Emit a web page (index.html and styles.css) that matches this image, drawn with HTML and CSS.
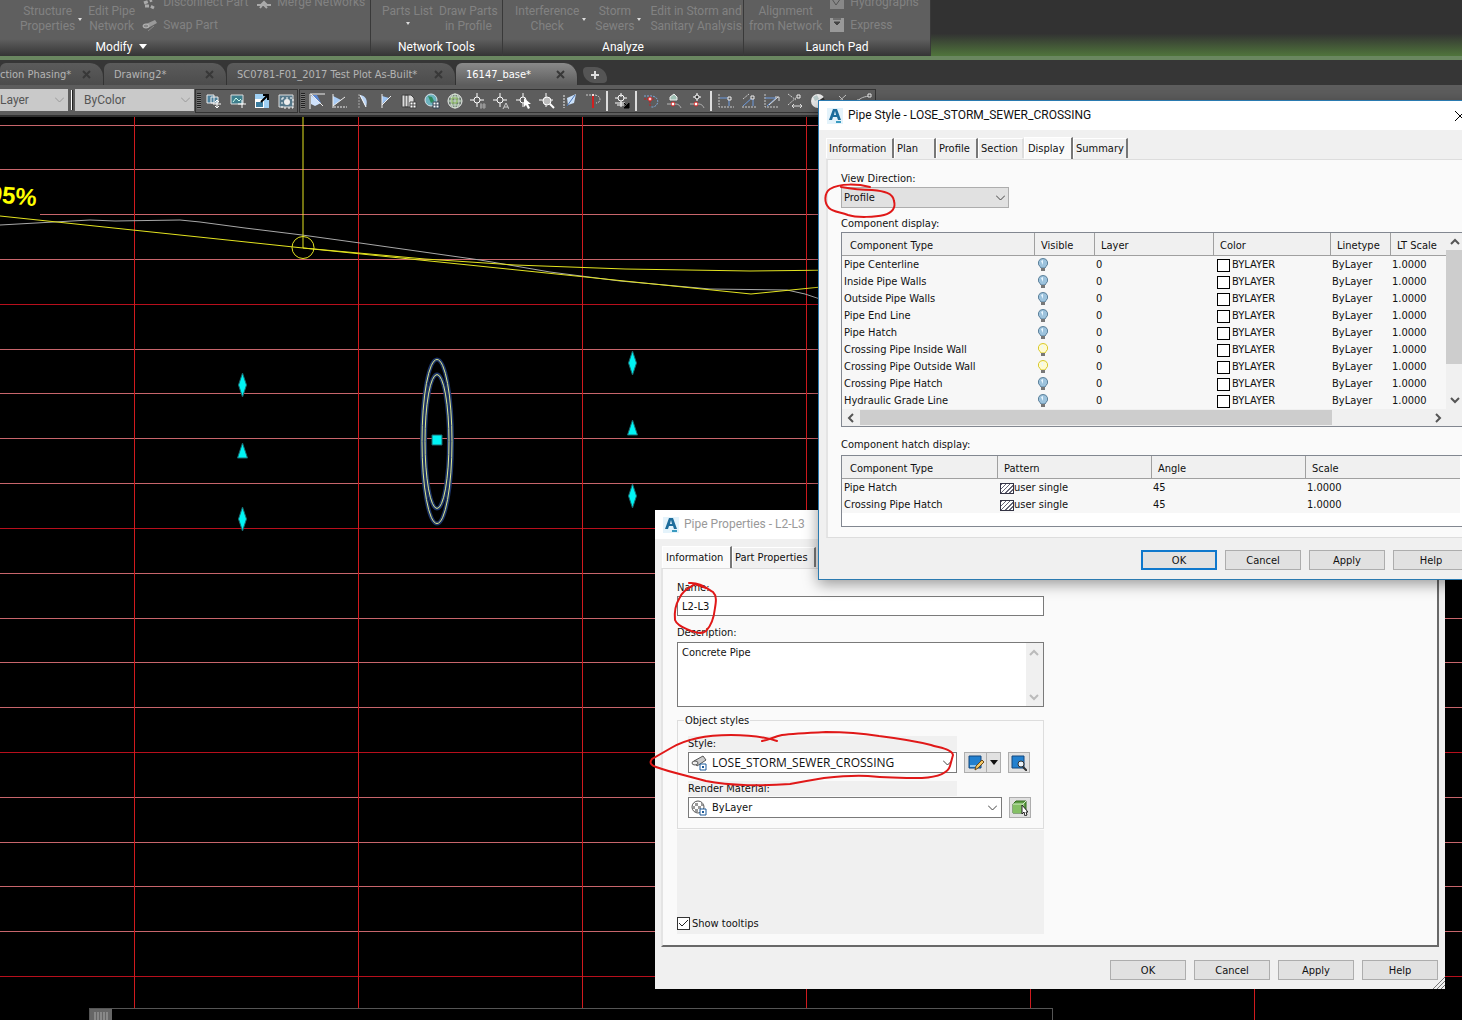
FILE: index.html
```html
<!DOCTYPE html>
<html lang="en">
<head>
    <meta charset="UTF-8">
    <meta name="viewport" content="width=device-width, initial-scale=1.0">
    <title>16147_base</title>
    <link rel="stylesheet" href="styles.css">
</head>
<body>
    <header class="ribbon">
        <section class="panel panel-modify">
            <div class="panel-body">
                <button class="tool drop"><span>Structure<br>Properties</span></button>
                <button class="tool"><span>Edit Pipe<br>Network</span></button>
                <div class="tool-list">
                    <button class="tool-row"><svg class="icon" viewBox="0 0 16 16"><path d="M2 9l8-3M3 12h5l4 2" stroke="#aaa" stroke-width="3" stroke-dasharray="4 2" fill="none"/></svg>Disconnect Part</button>
                    <button class="tool-row"><svg class="icon" viewBox="0 0 16 16"><path d="M4 7l9-4 2 3-9 5z" fill="#999"/><ellipse cx="4" cy="9" rx="3" ry="2" fill="#888" stroke="#bbb"/><path d="M6 14l6-5" stroke="#888"/></svg>Swap Part</button>
                </div>
                <div class="tool-list">
                    <button class="tool-row"><svg class="icon" viewBox="0 0 16 16"><path d="M1 11h4l3-3 3 3h4M4 14l3-4 4 4" stroke="#aaa" stroke-width="2" fill="none"/></svg>Merge Networks</button>
                </div>
            </div>
            <h2 class="panel-title">Modify <span class="caret"></span></h2>
        </section>
        <section class="panel panel-network">
            <div class="panel-body">
                <button class="tool drop-below"><span>Parts List</span></button>
                <button class="tool"><span>Draw Parts<br>in Profile</span></button>
            </div>
            <h2 class="panel-title">Network Tools</h2>
        </section>
        <section class="panel panel-analyze">
            <div class="panel-body">
                <button class="tool drop"><span>Interference<br>Check</span></button>
                <button class="tool drop"><span>Storm<br>Sewers</span></button>
                <button class="tool"><span>Edit in Storm and<br>Sanitary Analysis</span></button>
            </div>
            <h2 class="panel-title">Analyze</h2>
        </section>
        <section class="panel panel-launch">
            <div class="panel-body">
                <button class="tool"><span>Alignment<br>from Network</span></button>
                <div class="tool-list">
                    <button class="tool-row"><svg class="icon" viewBox="0 0 16 16"><path d="M1 1h14v14H1z" fill="#888"/><path d="M3 5l4 6 5-7" stroke="#555" fill="none"/></svg>Hydrographs</button>
                    <button class="tool-row"><svg class="icon" viewBox="0 0 16 16"><path d="M1 1h14v14H1z" fill="#999"/><path d="M4 2h8M5 5h6l-3 3z" stroke="#444" fill="#444"/></svg>Express</button>
                </div>
            </div>
            <h2 class="panel-title">Launch Pad</h2>
        </section>
    </header>

    <nav class="file-tabs">
        <a class="file-tab tab-first" href="#">ction Phasing* <svg class="close" viewBox="0 0 9 9"><path d="M1 1l7 7M8 1l-7 7"/></svg></a>
        <a class="file-tab tab-drawing" href="#">Drawing2* <svg class="close" viewBox="0 0 9 9"><path d="M1 1l7 7M8 1l-7 7"/></svg></a>
        <a class="file-tab tab-plot" href="#">SC0781-F01_2017 Test Plot As-Built* <svg class="close" viewBox="0 0 9 9"><path d="M1 1l7 7M8 1l-7 7"/></svg></a>
        <a class="file-tab tab-base current" href="#">16147_base* <svg class="close" viewBox="0 0 9 9"><path d="M1 1l7 7M8 1l-7 7"/></svg></a>
        <button class="new-tab" aria-label="New drawing"><svg viewBox="0 0 10 10" width="10" height="10"><path d="M5 1v8M1 5h8" stroke="#ddd" stroke-width="2"/></svg></button>
    </nav>

    <div class="toolbar">
        <select class="prop-select select-layer" aria-label="Lineweight"><option>Layer</option></select>
        <span class="grip-line"></span>
        <select class="prop-select select-color" aria-label="Plot style"><option>ByColor</option></select>
        <div class="tool-group group-image">
            <span class="grip"></span>
            <button aria-label="Move image"><svg class="icon" viewBox="0 0 16 16"><path d="M1 2h7v8H1zM5 4h7v6H5z" fill="#4b7f9b" stroke="#eee"/><path d="M11 7v8M7 11h8M9 9l2-2 2 2M9 13l2 2 2-2" stroke="#fff" fill="none"/></svg></button>
            <button aria-label="Insert image"><svg class="icon" viewBox="0 0 16 16"><path d="M1 2h12v9H1z" fill="#3f7f8d" stroke="#ddd"/><path d="M3 9l3-4 3 3 2-2" stroke="#cfe" fill="none"/><path d="M12 7v8M8 11h8" stroke="#fff"/></svg></button>
            <button aria-label="Scale image"><svg class="icon" viewBox="0 0 16 16"><path d="M1 1h14v14H1z" fill="#9fd0f4"/><path d="M1 6h9v9H1z" fill="#fff"/><path d="M2 9h7v5H2z" fill="#3c7d9f"/><path d="M7 9l7-7M9 2h5v5" stroke="#000" stroke-width="2" fill="none"/></svg></button>
            <button aria-label="Image frame"><svg class="icon" viewBox="0 0 16 16"><path d="M1 2h14v12H1z" fill="#56788a" stroke="#ddd"/><circle cx="9" cy="9" r="3" fill="#eee"/><path d="M4 5h11v10H4z" fill="none" stroke="#fff" stroke-dasharray="2 2"/></svg></button>
        </div>
        <div class="tool-group">
            <span class="grip"></span>
            <button aria-label="Angle distance"><svg class="icon" viewBox="0 0 16 16"><path d="M2 2l10 8-6 3-4-2z" fill="#cfe2fb"/><path d="M3 2l9 8-4-8z" fill="#5b88d4"/><path d="M1 16V1h15M2 1l12 12" stroke="#eee" fill="none"/></svg></button>
            <button aria-label="Bearing distance"><svg class="icon" viewBox="0 0 16 16"><path d="M1 3l8 4-8 6z" fill="#a9ccf6"/><path d="M1 1v14M1 13L13 4" stroke="#eee" fill="none"/><path d="M2 14h13" stroke="#eee" stroke-dasharray="2 1"/></svg></button>
            <button aria-label="Azimuth distance"><svg class="icon" viewBox="0 0 16 16"><path d="M5 2c6 1 8 5 6 12z" fill="#b9d3f4"/><path d="M4 1v14" stroke="#aaa" stroke-dasharray="2 1"/><path d="M5 2l6 12" stroke="#fff"/></svg></button>
            <button aria-label="Deflection"><svg class="icon" viewBox="0 0 16 16"><path d="M4 3l7 2-7 6z" fill="#9ec5f5"/><path d="M4 1v14M4 12l9-9" stroke="#eee"/></svg></button>
            <button aria-label="Northing easting"><svg class="icon" viewBox="0 0 16 16"><path d="M1 2h6v12H1zM4 2h6l3 3v9H4z" fill="#ddd" stroke="#444"/><path d="M9 9h6v6H9z" fill="#fff" stroke="#444"/><path d="M9 12h6M12 9v6" stroke="#444"/></svg></button>
            <button aria-label="Grid northing"><svg class="icon" viewBox="0 0 16 16"><circle cx="7" cy="7" r="6" fill="#6db3bf" stroke="#d8e4ec"/><path d="M4 3l4 1 2 4-3 2z" fill="#2d8b5c"/><path d="M9 9h6v6H9z" fill="#fff" stroke="#345"/><path d="M9 12h6M12 9v6" stroke="#345"/></svg></button>
            <button aria-label="Latitude longitude"><svg class="icon" viewBox="0 0 16 16"><circle cx="8" cy="8" r="7" fill="#6d7c72" stroke="#eee"/><path d="M1 8h14M8 1v14M3 4h10M3 12h10" stroke="#cfe0cc" fill="none"/><ellipse cx="8" cy="8" rx="4" ry="7" fill="none" stroke="#cfe0cc"/><path d="M5 5h5v5H5z" fill="none" stroke="#9c6"/></svg></button>
            <button aria-label="Point number"><svg class="icon" viewBox="0 0 16 16"><circle cx="7" cy="7" r="3" fill="none" stroke="#fff"/><path d="M7 0v4M7 10v4M0 7h4M10 7h4" stroke="#fff"/><path d="M11 10v6M14 10v6M10 12h6M10 14h6" stroke="#ccc" stroke-width=".6"/></svg></button>
            <button aria-label="Point name"><svg class="icon" viewBox="0 0 16 16"><circle cx="7" cy="7" r="3" fill="none" stroke="#fff"/><path d="M7 0v4M7 10v4M0 7h4M10 7h4" stroke="#fff"/><path d="M10 16l3-6 3 6M11 14h4" stroke="#ccc" fill="none"/></svg></button>
            <button aria-label="Point object"><svg class="icon" viewBox="0 0 16 16"><circle cx="7" cy="7" r="3" fill="none" stroke="#fff"/><path d="M7 0v4M7 10v4M0 7h4" stroke="#fff"/><path d="M8 5v9l2-2 2 4 2-1-2-4h3z" fill="#fff"/></svg></button>
            <button aria-label="Zoom to point"><svg class="icon" viewBox="0 0 16 16"><path d="M7 0v5M7 9v5M0 7h5M9 7h5" stroke="#fff"/><circle cx="8" cy="8" r="4" fill="#bbb" stroke="#fff"/><path d="M11 11l4 4" stroke="#fff" stroke-width="2"/></svg></button>
            <button aria-label="Side shot"><svg class="icon" viewBox="0 0 16 16"><path d="M2 2v13" stroke="#eee" stroke-dasharray="2 1"/><path d="M5 5l9-4-2 9-6 2z" fill="#cbe1fa"/><path d="M5 13l8-11" stroke="#4a75b5"/></svg></button>
            <button aria-label="Station offset"><svg class="icon" viewBox="0 0 16 16"><path d="M8 1v14" stroke="#d02020" stroke-width="2"/><path d="M1 2h9c7 1 6 8 1 8" stroke="#ccc" fill="none" stroke-dasharray="2 1"/><circle cx="8" cy="2" r="1" fill="#fff"/></svg></button>
            <span class="sep"></span>
            <button aria-label="Point transparency"><svg class="icon" viewBox="0 0 16 16"><circle cx="7" cy="5" r="3" fill="none" stroke="#fff"/><path d="M7 0v4M7 8v6M1 5h3M10 5h3M1 10h10M3 12h7" stroke="#fff"/><path d="M10 10l4 4M15 10v5h-5z" stroke="#000" fill="#000"/></svg></button>
            <span class="sep"></span>
            <button aria-label="Profile station"><svg class="icon" viewBox="0 0 16 16"><path d="M1 3h8c8 1 7 10 1 11H8" stroke="#7fa8d8" fill="none" stroke-dasharray="2 1"/><path d="M7 5v9M1 6h10" stroke="#c02020" stroke-dasharray="2 1"/><circle cx="7" cy="6" r="2" fill="#fcc" stroke="#d02020"/></svg></button>
            <button aria-label="Profile elevation"><svg class="icon" viewBox="0 0 16 16"><path d="M4 7V4l4-3 3 3v3z" fill="#9fc0b4" stroke="#eee"/><circle cx="7" cy="11" r="2" fill="#fff" stroke="#d02020"/><path d="M1 11h4M9 11c4 0 5 2 6 4" stroke="#b9b9b9" fill="none"/></svg></button>
            <button aria-label="Profile grade"><svg class="icon" viewBox="0 0 16 16"><circle cx="8" cy="4" r="2" fill="#333" stroke="#fff"/><path d="M8 0v2M8 6v2M4 4h2M10 4h2" stroke="#fff"/><circle cx="7" cy="11" r="2" fill="#fff" stroke="#d02020"/><path d="M1 11h4M9 11c4 0 5 2 6 4" stroke="#b9b9b9" fill="none"/></svg></button>
            <span class="sep"></span>
            <button aria-label="Station and elevation"><svg class="icon" viewBox="0 0 16 16"><path d="M1 1v13h15" stroke="#ccc" fill="none" stroke-dasharray="2 1"/><path d="M2 5h9v8" stroke="#6c9be0" fill="none"/><path d="M10 4h3v3h-3z" fill="#555" stroke="#eee"/></svg></button>
            <button aria-label="Grade length"><svg class="icon" viewBox="0 0 16 16"><path d="M1 14h14M2 6l6-5" stroke="#ccc" fill="none" stroke-dasharray="2 1"/><path d="M2 13L12 4v9" stroke="#6c9be0" fill="none"/><path d="M10 3h3v3h-3z" fill="#555" stroke="#eee"/></svg></button>
            <button aria-label="Grade station"><svg class="icon" viewBox="0 0 16 16"><path d="M1 1v13h14" stroke="#ccc" fill="none" stroke-dasharray="2 1"/><path d="M1 5h11L3 13" stroke="#6c9be0" fill="none"/><path d="M5 12l9-8M11 4h4v4" stroke="#ddd" fill="none"/></svg></button>
            <button aria-label="Grade elevation"><svg class="icon" viewBox="0 0 16 16"><path d="M1 12L11 3M1 1l8 6" stroke="#ccc" fill="none" stroke-dasharray="2 1"/><path d="M10 2h3v3h-3z" fill="#555" stroke="#eee"/><path d="M5 13h10M7 11l-2 2 2 2M13 11l2 2-2 2" stroke="#ddd" fill="none"/></svg></button>
            <button aria-label="Render"><svg class="icon" viewBox="0 0 16 16"><circle cx="8" cy="8" r="7" fill="#eee"/><path d="M8 8l6-4c2 4 1 9-3 10z" fill="#333"/><path d="M3 4l4-2 2 4-4 2z" fill="#bcc"/></svg></button>
            <button aria-label="Match radius"><svg class="icon" viewBox="0 0 16 16"><path d="M3 11L13 2M6 3l5 5" stroke="#ccc" fill="none"/></svg></button>
            <button aria-label="Match length"><svg class="icon" viewBox="0 0 16 16"><path d="M1 9c2-3 5-5 12-6" stroke="#ccc" fill="none"/><path d="M12 1h3v3h-3zM1 7h3v3H1z" fill="#555" stroke="#eee"/></svg></button>
        </div>
    </div>

    <main class="drawing">
        <svg class="canvas" width="100%" height="100%">
            <!-- profile view grid -->
            <path class="grid-minor" d="M0 8.5h4000M0 52.5h4000M0 97.5h4000M0 142.5h4000M0 232.5h4000M0 276.5h4000M0 321.5h4000M0 366.5h4000M0 456.5h4000M0 501.5h4000M0 545.5h4000M0 590.5h4000M0 680.5h4000M0 725.5h4000M0 769.5h4000M0 814.5h4000"/>
            <path class="grid-major" d="M0 187.5h4000M0 411.5h4000M0 635.5h4000M0 859.5h4000"/>
            <path class="grid-station" d="M134.5 0v2000M358.5 0v2000M582.5 0v2000M806.5 0v2000M1030.5 0v2000M1254.5 0v2000"/>
            <path d="M0 62h40v36H0z" fill="#000"/>
            <text class="slope" x="36" y="89" transform="rotate(5 36 89)">0.95%</text>
            <!-- ground and pipe runs -->
            <path class="ground" d="M0 108L90 103L115 104L180 103L200 105L245 111L302 118L360 126L480 143L550 155L620 164L710 172L787 173L805 177L820 182"/>
            <path class="run" d="M0 99l303 32 448 46 80-8M303 131l122 11 90 6 110 4 125 2 90-1M303 0v131"/>
            <circle class="run" cx="303" cy="130.500" r="11"/>
            <g class="pipe-glow">
                <ellipse cx="437" cy="324.500" rx="15" ry="82"/>
                <ellipse cx="437" cy="324.500" rx="12" ry="67"/>
            </g>
            <g class="pipe">
                <ellipse cx="437" cy="324.500" rx="15" ry="82"/>
                <ellipse cx="437" cy="324.500" rx="12" ry="67"/>
            </g>
            <path class="grip-mark" d="M432 318h10v10h-10zM242.500 256l4 12-4 12-4-12zM242.500 326l5 15h-10zM242.500 390l4 12-4 12-4-12zM632.500 234l4 12-4 12-4-12zM632.500 303l5 15h-10zM632.500 367l4 12-4 12-4-12z"/>
        </svg>
        <div class="command-line">
            <span class="command-grip"></span>
            <input class="command-input" type="text" aria-label="Command">
        </div>
    </main>

    <form class="window win-properties">
        <div class="title-bar">
            <svg class="app-icon" viewBox="0 0 16 16"><path d="M0 0h16v16H0z" fill="#e4f3fb"/><path d="M2 12L6 1h4l4 11h-3l-1-3H6l-1 3z" fill="#1d6d9c"/><path d="M7 7h2L8 3z" fill="#e4f3fb"/><path d="M9 14h5" stroke="#3a9ac0" stroke-width="2"/></svg>
            <h1>Pipe Properties - L2-L3</h1>
        </div>
        <div class="tabs">
            <button type="button" class="tab active tab-info">Information</button>
            <button type="button" class="tab tab-part">Part Properties</button>
        </div>
        <div class="sheet">
            <div class="info-column">
                <label for="pipe-name">Name:</label>
                <input id="pipe-name" type="text" value="L2-L3">
                <label for="pipe-desc" class="label-desc">Description:</label>
                <div class="text-area">
                    <textarea id="pipe-desc">Concrete Pipe</textarea>
                    <div class="text-scroll">
                        <svg viewBox="0 0 9 6"><path d="M1 5l4-4 4 4"/></svg>
                        <svg viewBox="0 0 9 6"><path d="M1 1l4 4 4-4"/></svg>
                    </div>
                </div>
                <fieldset>
                    <legend>Object styles</legend>
                    <label class="shade" for="pipe-style">Style:</label>
                    <div class="field-row">
                        <div class="combo combo-style">
                            <svg class="icon" viewBox="0 0 16 16"><path d="M3 6l9-5 3 4-9 6z" fill="#ccc" stroke="#555"/><ellipse cx="4" cy="8" rx="3" ry="2" fill="#eee" stroke="#555"/><path d="M9 9h6v6H9z" fill="#fff" stroke="#1c5a9a"/><path d="M11 11h2v2h-2z" fill="#1c5a9a"/></svg>
                            <select id="pipe-style"><option>LOSE_STORM_SEWER_CROSSING</option></select>
                        </div>
                        <div class="split">
                            <button type="button" class="edit-style" aria-label="Edit style"><svg class="icon" viewBox="0 0 16 16"><path d="M1 1h12v12H1z" fill="#2280cf" stroke="#12467c"/><path d="M2 10h7v2H2z" fill="#8cc4f0"/><path d="M7 15l1-4 6-6 2 2-6 6z" fill="#f2c766" stroke="#6b4a1a"/></svg></button>
                            <button type="button" class="edit-menu" aria-label="Style menu"><span class="caret"></span></button>
                        </div>
                        <button type="button" class="pick" aria-label="Style details"><svg class="icon" viewBox="0 0 16 16"><path d="M1 1h12v12H1z" fill="#2280cf" stroke="#12467c"/><circle cx="10" cy="9" r="3" fill="#e8f2fa" stroke="#333"/><path d="M12 12l4 4" stroke="#333" stroke-width="2"/></svg></button>
                    </div>
                    <label class="shade" for="pipe-material">Render Material:</label>
                    <div class="field-row">
                        <div class="combo combo-material">
                            <svg class="icon" viewBox="0 0 16 16"><circle cx="7" cy="7" r="6" fill="#fff" stroke="#555"/><path d="M4 3h3v3H4zM7 6h3v3H7zM2 6h2v3H2zM4 9h3v3H4zM10 3h2v3h-2z" fill="#999"/><path d="M9 9h6v6H9z" fill="#fff" stroke="#1c5a9a"/><path d="M11 11h2v2h-2z" fill="#1c5a9a"/></svg>
                            <select id="pipe-material"><option>ByLayer</option></select>
                        </div>
                        <button type="button" class="pick" aria-label="Pick material"><svg class="icon" viewBox="0 0 16 16"><path d="M1 4l3-3h10v9l-3 3H1z" fill="#5d9e43" stroke="#33691e"/><path d="M1 4h10v9H1z" fill="#84c065"/><path d="M1 4h10l3-3M11 4v9" stroke="#d5ecc8" fill="none"/><path d="M10 5v9l2-2 1 4 2-1-1-3h2z" fill="#fff" stroke="#222"/></svg></button>
                    </div>
                </fieldset>
                <div class="tooltips">
                    <input id="show-tooltips" type="checkbox" checked>
                    <label for="show-tooltips">Show tooltips</label>
                </div>
            </div>
        </div>
        <div class="buttons">
            <button type="button">OK</button>
            <button type="button">Cancel</button>
            <button type="button">Apply</button>
            <button type="button">Help</button>
        </div>
        <svg class="resize" viewBox="0 0 12 12"><path d="M0 12L12 0M4 12l8-8M8 12l4-4" stroke="#777"/></svg>
    </form>

    <form class="window win-style">
        <div class="title-bar">
            <svg class="app-icon" viewBox="0 0 16 16"><path d="M0 0h16v16H0z" fill="#e4f3fb"/><path d="M2 12L6 1h4l4 11h-3l-1-3H6l-1 3z" fill="#1d6d9c"/><path d="M7 7h2L8 3z" fill="#e4f3fb"/><path d="M9 14h5" stroke="#3a9ac0" stroke-width="2"/></svg>
            <h1>Pipe Style - LOSE_STORM_SEWER_CROSSING</h1>
            <button type="button" class="close-window" aria-label="Close"><svg viewBox="0 0 10 10" width="10" height="10"><path d="M0 0l10 10M10 0L0 10" stroke="#000"/></svg></button>
        </div>
        <div class="tabs">
            <button type="button" class="tab tab-w66">Information</button>
            <button type="button" class="tab tab-w42">Plan</button>
            <button type="button" class="tab tab-w42">Profile</button>
            <button type="button" class="tab tab-w46">Section</button>
            <button type="button" class="tab active tab-w48">Display</button>
            <button type="button" class="tab tab-w54">Summary</button>
        </div>
        <div class="sheet">
            <label for="view-direction">View Direction:</label>
            <select id="view-direction"><option>Profile</option></select>
            <h2>Component display:</h2>
            <div class="list">
                <div class="list-main">
                    <table class="components">
                        <thead>
                            <tr><th class="c-type">Component Type</th><th class="c-visible">Visible</th><th class="c-layer">Layer</th><th class="c-color">Color</th><th class="c-line">Linetype</th><th class="c-scale">LT Scale</th></tr>
                        </thead>
                        <tbody id="component-rows"></tbody>
                    </table>
                    <div class="v-scroll">
                        <svg viewBox="0 0 9 6"><path d="M1 5l4-4 4 4"/></svg>
                        <span class="v-thumb"></span>
                        <svg viewBox="0 0 9 6"><path d="M1 1l4 4 4-4"/></svg>
                    </div>
                </div>
                <div class="h-scroll">
                    <svg viewBox="0 0 6 9"><path d="M5 1L1 5l4 4"/></svg>
                    <span class="h-thumb"></span>
                    <svg viewBox="0 0 6 9"><path d="M1 1l4 4-4 4"/></svg>
                </div>
            </div>
            <h2 class="hatch-title">Component hatch display:</h2>
            <div class="list list-hatch">
                <table class="hatches">
                    <thead>
                        <tr><th class="h-type">Component Type</th><th>Pattern</th><th>Angle</th><th>Scale</th></tr>
                    </thead>
                    <tbody>
                        <tr><td>Pipe Hatch</td><td><span class="hatch"></span>user single</td><td>45</td><td>1.0000</td></tr>
                        <tr><td>Crossing Pipe Hatch</td><td><span class="hatch"></span>user single</td><td>45</td><td>1.0000</td></tr>
                    </tbody>
                </table>
            </div>
        </div>
        <div class="buttons">
            <button type="button" class="default">OK</button>
            <button type="button">Cancel</button>
            <button type="button">Apply</button>
            <button type="button">Help</button>
        </div>
    </form>

    <!-- red pen markup -->
    <svg class="markup" width="100%" height="100%">
        <path d="M870 187C858 184 840 183 830 189C824 193 824 203 829 208C833 212 840 212 848 215C857 218 876 217 884 215C892 213 896 208 894 201C893 193 884 191 872 190C862 190 852 189 841 187"/>
        <path d="M689 583C699 582 706 588 713 592C717 596 716 602 715 608C714 617 711 626 706 631C701 635 696 632 691 631C685 628 677 626 675 620C674 610 676 604 679 599C682 591 689 588 695 584L706 588"/>
        <path d="M777 741C762 736 747 735 731 735C708 735 686 739 671 748L652 759C649 763 651 765 656 767C672 773 690 776 706 781C730 786 765 786 790 784C806 781 812 780 824 778C842 776 856 775 868 776C890 778 908 778 922 778C937 777 948 773 950 766L953 755C952 749 940 748 931 745C911 740 895 738 879 736C860 733 845 732 826 732C806 733 790 734 782 735C773 737 769 740 762 741"/>
    </svg>

    <script>
        const components = [
            ['Pipe Centerline', false],
            ['Inside Pipe Walls', false],
            ['Outside Pipe Walls', false],
            ['Pipe End Line', false],
            ['Pipe Hatch', false],
            ['Crossing Pipe Inside Wall', true],
            ['Crossing Pipe Outside Wall', true],
            ['Crossing Pipe Hatch', false],
            ['Hydraulic Grade Line', false]
        ];

        function bulb(on) {
            return `<svg class="bulb ${on ? 'on' : ''}" viewBox="0 0 10 14">
                <path class="glass" d="M5 .5a4.500 4.500 0 0 1 3 8L7 10H3L2 8.500a4.500 4.500 0 0 1 3-8z"/>
                <path class="shine" d="M3 3l2-1v5z"/>
                <path class="base" d="M3 10h4v3H3z"/>
            </svg>`;
        }

        document.getElementById('component-rows').innerHTML = components.map(([name, on]) => `
            <tr>
                <td>${name}</td>
                <td class="cell-bulb">${bulb(on)}</td>
                <td>0</td>
                <td><span class="swatch"></span>BYLAYER</td>
                <td>ByLayer</td>
                <td>1.0000</td>
            </tr>`).join('');
    </script>
</body>
</html>
```

FILE: styles.css
```css
:root {
    --ui-font: "DejaVu Sans Condensed", "Open Sans", sans-serif;
    --ribbon-font: Roboto, "Open Sans", sans-serif;
    --combo-font: "Open Sans", "Noto Sans", sans-serif;
    --face: #f0f0f0;
    --sheet: #fafafa;
    --chevron: url("data:image/svg+xml,%3Csvg xmlns='http://www.w3.org/2000/svg' width='9' height='6'%3E%3Cpath d='M0 0.500l4.500 4.500 4.500-4.500' fill='none' stroke='%23444'/%3E%3C/svg%3E");
    --chevron-dim: url("data:image/svg+xml,%3Csvg xmlns='http://www.w3.org/2000/svg' width='9' height='6'%3E%3Cpath d='M0 0.500l4.500 4.500 4.500-4.500' fill='none' stroke='%23999'/%3E%3C/svg%3E");
}

* {
    box-sizing: border-box;
}
body {
    margin: 0;
    height: 100vh;
    display: flex;
    flex-direction: column;
    overflow: hidden;
    position: relative;
    background: #000;
    font-family: var(--ui-font);
    font-size: 11px;
    line-height: 15px;
    color: #111;
}
button, input, select, textarea {
    font: inherit;
    color: inherit;
    margin: 0;
    padding: 0;
    border: 0;
    border-radius: 0;
    background: none;
    outline: none;
}
h1, h2 {
    margin: 0;
    font-size: inherit;
    font-weight: normal;
}
.icon {
    width: 16px;
    height: 16px;
    flex: none;
}
.caret {
    display: inline-block;
    border: 4px solid transparent;
    border-top: 5px solid currentColor;
    border-bottom: 0;
}

/* ribbon */
.ribbon {
    display: flex;
    flex: none;
    height: 60px;
    font-family: var(--ribbon-font);
    font-size: 12px;
    background: linear-gradient(#323232 60%, #50753c);
    border-bottom: 4px solid #6a8760;
    overflow: hidden;
}
.panel {
    display: flex;
    flex-direction: column;
    border-right: 1px solid #393939;
    background: linear-gradient(#5f5f5f 70%, #353535);
}
.panel-modify { width: 371px; }
.panel-network { width: 132px; }
.panel-analyze { width: 241px; }
.panel-launch { width: 187px; }
.panel-body {
    display: flex;
    height: 41px;
    color: #828282;
}
.panel-title {
    text-align: center;
    color: #fff;
    line-height: 17px;
}
.panel-modify .panel-title {
    padding-right: 127px;
}
.panel-modify .caret {
    margin: 0 0 2px 4px;
}
.panel-modify .panel-body { padding-left: 17px; }
.panel-network .panel-body { padding-left: 8px; }
.panel-analyze .panel-body { padding-left: 9px; gap: 3px; }
.panel-launch .panel-body { padding-left: 2px; }
.tool {
    display: flex;
    align-items: flex-start;
    padding: 4px 3px 0;
    white-space: nowrap;
}
.drop::after, .drop-below::after {
    content: "";
    margin: 14px 0 0 3px;
    border: 2px solid transparent;
    border-top: 3px solid #ddd;
    border-bottom: 0;
}
.drop-below {
    flex-direction: column;
    align-items: center;
}
.drop-below::after {
    margin: 3px 0 0;
}
.tool-list {
    display: flex;
    flex-direction: column;
    gap: 7px;
    margin: -6px 4px 0;
}
.tool-row {
    display: flex;
    align-items: center;
    gap: 5px;
    height: 16px;
    white-space: nowrap;
}

/* drawing tabs */
.file-tabs {
    display: flex;
    flex: none;
    height: 25px;
    padding-top: 3px;
    background: #363636;
}
.file-tab {
    display: flex;
    align-items: center;
    justify-content: space-between;
    color: #b4b4b4;
    background: linear-gradient(#5b5b5b, #4c4c4c);
    border-right: 1px solid #333;
    border-radius: 6px 14px 0 0;
    padding: 0 12px 0 10px;
    text-decoration: none;
    white-space: nowrap;
}
.tab-first { width: 104px; padding-left: 0; }
.tab-drawing { width: 123px; }
.tab-plot { width: 229px; }
.tab-base { width: 122px; }
.file-tab.current {
    color: #fff;
    background: linear-gradient(#8a8a8a, #5d5d5d);
}
.close {
    flex: none;
    width: 9px;
    height: 9px;
}
.close path {
    stroke: #383838;
    stroke-width: 2;
}
.new-tab {
    display: flex;
    align-items: center;
    justify-content: center;
    width: 24px;
    height: 16px;
    margin: 4px 0 0 5px;
    background: #555;
    border-radius: 4px 12px 4px 12px;
}

/* toolbars */
.toolbar {
    display: flex;
    flex: none;
    height: 32px;
    padding: 4px 0;
    gap: 3px;
    background: #5d5d5d;
    border-bottom: 2px solid #303030;
}
.prop-select {
    appearance: none;
    height: 22px;
    padding-left: 9px;
    font-family: var(--ribbon-font);
    font-size: 12px;
    color: #555;
    background: var(--chevron-dim) no-repeat right 4px center #c9c9c9;
}
.select-layer { width: 68px; padding-left: 0; }
.select-color { width: 119px; }
.grip-line {
    width: 2px;
    height: 20px;
    border-left: 1px solid #fff;
    background: #222;
    margin: 1px -1px 0 0;
}
.tool-group {
    display: flex;
    align-items: center;
    height: 24px;
    border: 1px solid #333;
    padding-left: 1px;
}
.group-image {
    gap: 1px;
    margin: 0 -2px 0 -2px;
}
.tool-group button {
    display: flex;
    justify-content: center;
    width: 23px;
}
.grip {
    width: 4px;
    height: 16px;
    background: repeating-linear-gradient(#222 0 1px, #777 1px 2px);
}
.sep {
    width: 2px;
    height: 20px;
    margin: 0 2px;
    background: #ddd;
}

/* drawing */
.drawing {
    flex: 1;
    position: relative;
    min-height: 0;
    background: #000;
    overflow: hidden;
}
.canvas {
    display: block;
}
.grid-minor { stroke: #c8666c; }
.grid-major { stroke: #b80f1c; }
.grid-station { stroke: #d01a1e; }
.ground {
    fill: none;
    stroke: #a8a8a8;
}
.run {
    fill: none;
    stroke: #e4e420;
}
.pipe {
    fill: none;
    stroke: #dfe88c;
}
.pipe-glow {
    fill: none;
    stroke: #1c3468;
    stroke-width: 4;
}
.grip-mark {
    fill: #00f4f4;
    stroke: #1a6a70;
    stroke-width: 1;
}
.slope {
    font: bold 24px "Liberation Sans", sans-serif;
    text-anchor: end;
    fill: #ff0;
}
.command-line {
    position: absolute;
    left: 89px;
    bottom: 0;
    width: 964px;
    height: 12px;
    display: flex;
    background: #000;
    border: 1px solid #555;
    border-bottom: 0;
}
.command-grip {
    width: 22px;
    border: 3px solid #666;
    border-bottom: 0;
    background: repeating-linear-gradient(90deg, #666 0 1px, #888 1px 3px);
}
.command-input {
    flex: 1;
}

/* windows */
.window {
    position: absolute;
    display: flex;
    flex-direction: column;
    background: var(--face);
}
.win-properties {
    left: 655px;
    top: 510px;
    width: 790px;
    padding-bottom: 9px;
}
.win-style {
    left: 818px;
    top: 100px;
    width: 660px;
    padding-bottom: 9px;
    border: 1px solid #2a7ab0;
    box-shadow: 0 4px 14px rgba(0, 0, 0, 0.4);
}
.title-bar {
    display: flex;
    align-items: center;
    height: 29px;
    padding-left: 8px;
    gap: 5px;
    background: #fff;
    font-family: var(--ribbon-font);
    font-size: 12px;
}
.win-properties .title-bar {
    color: #999;
}
.app-icon {
    width: 16px;
    height: 16px;
}
.close-window {
    margin-left: auto;
    padding-right: 12px;
    display: flex;
}
.tabs {
    display: flex;
    height: 29px;
    padding: 8px 0 0 7px;
}
.tab {
    border-left: 1px solid #fff;
    border-top: 1px solid #fff;
    border-right: 2px solid #777;
    text-align: left;
    padding-left: 2px;
    margin-bottom: 1px;
    white-space: nowrap;
}
.tab.active {
    background: var(--sheet);
    margin: -1px 0 0;
    padding-left: 3px;
}
.tab-info { width: 70px; }
.tab-part { width: 84px; }
.tab-w66 { width: 68px; }
.tab-w42 { width: 42px; }
.tab-w46 { width: 46px; border-right-color: #ddd; }
.tab-w48 { width: 49px; }
.tab-w54 { width: 55px; }
.sheet {
    background: var(--sheet);
    border: 1px solid #ddd;
    border-left: 2px solid #e4e4e4;
}
.sheet label, .sheet h2 {
    display: block;
}
.buttons {
    display: flex;
    justify-content: flex-end;
    gap: 8px;
    padding: 12px 8px 0;
}
.buttons button {
    width: 76px;
    height: 20px;
    background: #e1e1e1;
    border: 1px solid #adadad;
}
.buttons .default {
    border: 2px solid #0f78cc;
}

/* pipe properties */
.win-properties .sheet {
    margin: 0 6px;
    padding: 11px 0 11px 14px;
    border-right: 2px solid #696969;
    border-bottom: 2px solid #696969;
}
.win-properties .buttons {
    padding: 13px 7px 0;
}
.info-column {
    width: 367px;
}
#pipe-name {
    display: block;
    width: 100%;
    height: 20px;
    margin-top: 1px;
    padding: 0 4px;
    border: 1px solid #7a7a7a;
    background: #fff;
}
.label-desc {
    margin-top: 9px;
}
.text-area {
    display: flex;
    height: 65px;
    margin-top: 2px;
    border: 1px solid #7a7a7a;
    background: #fff;
}
.text-area textarea {
    flex: 1;
    resize: none;
    padding: 2px 4px;
}
.text-scroll {
    display: flex;
    flex-direction: column;
    justify-content: space-between;
    align-items: center;
    width: 17px;
    padding: 7px 2px 6px 0;
    background: var(--face);
}
.text-scroll svg {
    width: 9px;
    height: 6px;
    overflow: visible;
}
.text-scroll path {
    fill: none;
    stroke: #bbb;
    stroke-width: 2;
}
fieldset {
    margin: 6px 0 0;
    padding: 8px 10px 10px;
    border: 1px solid #ddd;
}
legend {
    padding: 0 1px;
    margin-left: -4px;
}
.shade {
    width: 269px;
    height: 15px;
    background: var(--face);
}
.field-row + .shade {
    margin-top: 8px;
}
.field-row {
    display: flex;
    height: 21px;
    margin-top: 1px;
    gap: 7px;
}
.combo {
    position: relative;
}
.combo-style { width: 269px; }
.combo-material { width: 314px; }
.combo .icon {
    position: absolute;
    left: 3px;
    top: 3px;
}
.combo select {
    appearance: none;
    width: 100%;
    height: 21px;
    padding-left: 23px;
    border: 1px solid #7a7a7a;
    font-family: var(--combo-font);
    font-size: 12px;
    background: var(--chevron) no-repeat right 4px center #fff;
}
#pipe-material {
    font-family: var(--ui-font);
    font-size: 11px;
}
.split {
    display: flex;
    width: 37px;
}
.split button, .pick {
    display: flex;
    align-items: center;
    justify-content: center;
    background: #e1e1e1;
    border: 1px solid #adadad;
}
.split .edit-style { width: 23px; }
.split .edit-menu {
    width: 15px;
    margin-left: -1px;
}
.pick {
    width: 22px;
}
.tooltips {
    display: flex;
    align-items: flex-end;
    gap: 2px;
    height: 104px;
    margin-top: 1px;
    padding-bottom: 3px;
    background: var(--face);
}
.tooltips input {
    appearance: none;
    width: 13px;
    height: 13px;
    margin-bottom: 1px;
    border: 1px solid #333;
    background: url("data:image/svg+xml,%3Csvg xmlns='http://www.w3.org/2000/svg' width='11' height='11'%3E%3Cpath d='M1 5l3 3 6-6' fill='none' stroke='%23222'/%3E%3C/svg%3E") #fff;
}
.resize {
    position: absolute;
    right: 0;
    bottom: 0;
    width: 12px;
    height: 12px;
}

/* pipe style */
.win-style .sheet {
    margin: 0 7px;
    padding: 11px 5px 10px 13px;
}
#view-direction {
    appearance: none;
    display: block;
    width: 168px;
    height: 21px;
    margin-top: 1px;
    padding-left: 2px;
    border: 1px solid #adadad;
    background: var(--chevron) no-repeat right 3px center #e1e1e1;
}
.win-style .sheet h2 {
    margin-top: 8px;
}
.win-style .sheet .hatch-title {
    margin-top: 10px;
}
.list {
    margin-top: 1px;
    border: 1px solid #828790;
    background: #fff;
}
.list-hatch {
    height: 72px;
    margin-top: 3px;
}
.list-main {
    display: flex;
}
table {
    border-collapse: separate;
    border-spacing: 0;
    table-layout: fixed;
}
th {
    height: 23px;
    padding: 2px 0 0 6px;
    text-align: left;
    font-weight: normal;
    background: var(--face);
    border-right: 1px solid #a0a0a0;
    border-bottom: 1px solid #a0a0a0;
}
th:first-child {
    padding-left: 8px;
}
th:last-child {
    border-right: 0;
}
td {
    height: 17px;
    padding: 0 0 0 1px;
    background: #f7f7f7;
    white-space: nowrap;
    line-height: 16px;
}
td:first-child {
    padding-left: 2px;
}
.components { width: 604px; }
.c-type { width: 193px; }
.c-visible { width: 60px; }
.c-layer { width: 119px; }
.c-color { width: 117px; }
.c-line { width: 60px; }
.hatches { width: 618px; }
.h-type { width: 156px; }
.cell-bulb {
    padding-left: 3px;
}
.bulb {
    display: block;
    width: 10px;
    height: 14px;
}
.bulb .glass {
    fill: #9dc3dd;
    stroke: #5b7f99;
}
.bulb .shine { fill: #e8f6ff; }
.bulb .base { fill: #777; }
.bulb.on .glass {
    fill: #fffbd0;
    stroke: #d8c828;
}
.swatch, .hatch {
    display: inline-block;
    vertical-align: top;
    width: 13px;
    height: 13px;
    margin: 2px 2px 0;
    border: 1px solid #000;
    background: #fff;
}
.hatch {
    width: 14px;
    height: 11px;
    margin: 3px 0 0 1px;
    border-color: #334;
    background: repeating-linear-gradient(135deg, #667 0 1px, #fff 1px 3px);
}
.v-scroll {
    display: flex;
    flex-direction: column;
    align-items: center;
    width: 16px;
    padding: 6px 0;
    gap: 5px;
    background: var(--face);
}
.v-scroll svg {
    width: 9px;
    height: 6px;
    overflow: visible;
}
.h-scroll svg {
    width: 6px;
    height: 9px;
    overflow: visible;
}
.v-scroll path, .h-scroll path {
    fill: none;
    stroke: #555;
    stroke-width: 2;
}
.v-thumb {
    width: 100%;
    height: 114px;
    background: #cdcdcd;
    margin-bottom: auto;
}
.h-scroll {
    display: flex;
    align-items: center;
    height: 17px;
    gap: 6px;
    padding: 0 22px 0 6px;
    background: var(--face);
}
.h-thumb {
    width: 472px;
    height: 15px;
    background: #cdcdcd;
    margin-right: auto;
}

/* markup */
.markup {
    position: absolute;
    left: 0;
    top: 0;
    pointer-events: none;
}
.markup path {
    fill: none;
    stroke: #e01818;
    stroke-width: 2;
    stroke-linecap: round;
}
```
